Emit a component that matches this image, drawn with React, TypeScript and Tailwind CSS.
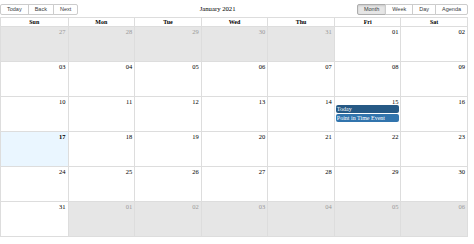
import clsx from 'clsx';

type Day = { label: string; off?: boolean; today?: boolean };

const weeks: Day[][] = [
    [
        { label: '27', off: true },
        { label: '28', off: true },
        { label: '29', off: true },
        { label: '30', off: true },
        { label: '31', off: true },
        { label: '01' },
        { label: '02' },
    ],
    ['03', '04', '05', '06', '07', '08', '09'].map((label) => ({ label })),
    ['10', '11', '12', '13', '14', '15', '16'].map((label) => ({ label })),
    [{ label: '17', today: true }, ...['18', '19', '20', '21', '22', '23'].map((label) => ({ label }))],
    ['24', '25', '26', '27', '28', '29', '30'].map((label) => ({ label })),
    [{ label: '31' }, ...['01', '02', '03', '04', '05', '06'].map((label) => ({ label, off: true }))],
];

const weekdays = ['Sun', 'Mon', 'Tue', 'Wed', 'Thu', 'Fri', 'Sat'];

// events keyed by "week-day"
const events: Record<string, { title: string; selected?: boolean }[]> = {
    '2-5': [{ title: 'Today', selected: true }, { title: 'Point in Time Event' }],
};

function ToolbarButton({ label, active, first, last }: { label: string; active?: boolean; first?: boolean; last?: boolean }) {
    return (
        <button
            className={clsx(
                "h-[11px] px-[6px] border text-[5.5px] leading-none text-[#373a3c] font-['Liberation_Sans',sans-serif]",
                !first && '-ml-px',
                first && 'rounded-l-[2px]',
                last && 'rounded-r-[2px]',
                active
                    ? 'bg-[#e6e6e6] border-[#adadad] shadow-[inset_0_1px_2px_rgba(0,0,0,0.125)]'
                    : 'bg-white border-[#ccc]'
            )}
        >
            {label}
        </button>
    );
}

export default function App() {
    return (
        <div className="w-[474px] h-[244px] bg-white font-['Liberation_Serif',serif] text-black">
            <div className="w-[468px]">
                {/* Toolbar */}
                <div className="flex items-center pt-[4px] pb-[2px]">
                    <div className="flex">
                        <ToolbarButton label="Today" first />
                        <ToolbarButton label="Back" />
                        <ToolbarButton label="Next" last />
                    </div>
                    <div className="flex-1 text-center text-[6.7px] leading-none">January 2021</div>
                    <div className="flex">
                        <ToolbarButton label="Month" first active />
                        <ToolbarButton label="Week" />
                        <ToolbarButton label="Day" />
                        <ToolbarButton label="Agenda" last />
                    </div>
                </div>

                {/* Month view */}
                <div className="h-[220px] flex flex-col border border-[#ddd]">
                    <div className="grid grid-cols-7 h-[9px] border-b border-[#ddd]">
                        {weekdays.map((d, i) => (
                            <div
                                key={d}
                                className={clsx(
                                    'text-center text-[6px] font-bold leading-[8px]',
                                    i > 0 && 'border-l border-[#ddd]'
                                )}
                            >
                                {d}
                            </div>
                        ))}
                    </div>
                    {weeks.map((week, w) => (
                        <div key={w} className={clsx('flex-1 grid grid-cols-7', w > 0 && 'border-t border-[#ddd]')}>
                            {week.map((day, d) => (
                                <div
                                    key={d}
                                    className={clsx(
                                        'flex flex-col min-w-0',
                                        d > 0 && 'border-l border-[#ddd]',
                                        day.off && 'bg-[#e6e6e6]',
                                        day.today && 'bg-[#eaf6ff]'
                                    )}
                                >
                                    <div
                                        className={clsx(
                                            'text-right pr-[2px] pt-[1px] text-[6.5px] leading-[7px]',
                                            day.off && 'text-[#999]',
                                            day.today && 'font-bold'
                                        )}
                                    >
                                        {day.label}
                                    </div>
                                    {(events[`${w}-${d}`] ?? []).map((ev) => (
                                        <div key={ev.title} className="px-[1px] pb-[1px]">
                                            <div
                                                className={clsx(
                                                    'h-[8px] rounded-[2px] px-[1px] text-white text-[6px] leading-[8px] whitespace-nowrap overflow-hidden',
                                                    ev.selected ? 'bg-[#265985]' : 'bg-[#3174ad]'
                                                )}
                                            >
                                                {ev.title}
                                            </div>
                                        </div>
                                    ))}
                                </div>
                            ))}
                        </div>
                    ))}
                </div>
            </div>
        </div>
    );
}
